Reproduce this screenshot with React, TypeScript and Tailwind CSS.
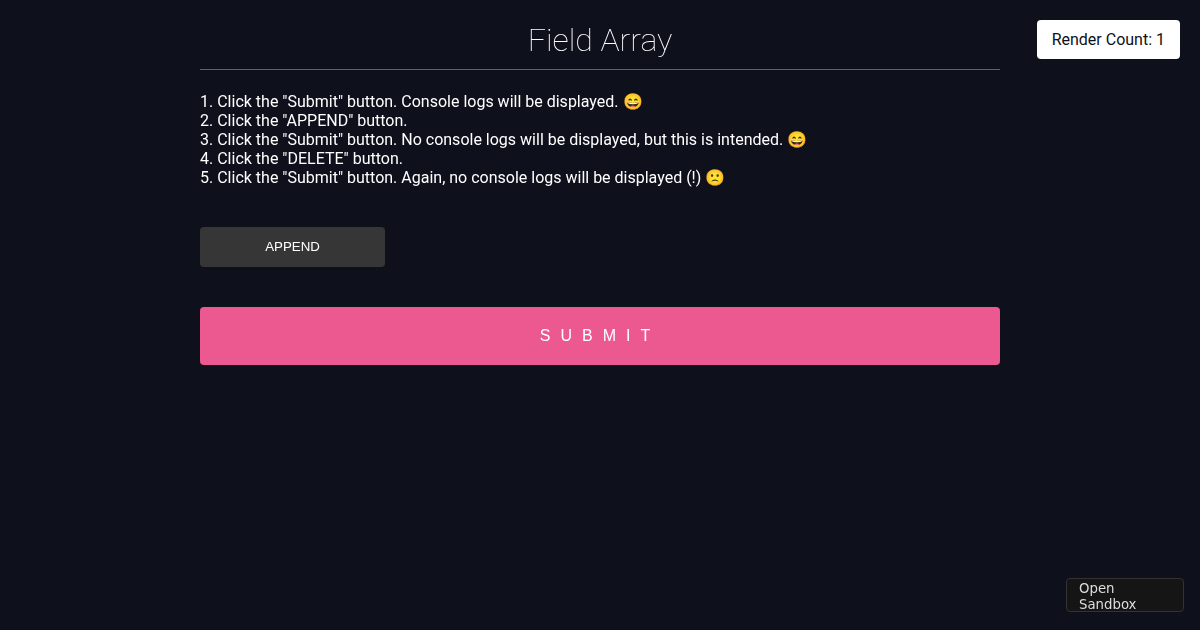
export default function App() {
  return (
    <div className="relative min-h-[630px] bg-[#0e101c] font-['Roboto',sans-serif] text-white overflow-hidden">
      <div className="absolute top-5 right-5 bg-white text-[#0e101c] rounded px-[15px] h-[39px] flex items-center text-base transform-gpu">
        Render Count: 1
      </div>
      <div className="w-[800px] mx-auto transform-gpu">
        <h1 className="text-[32px] font-thin text-center h-[70px] pt-[21px] leading-[38px] border-b border-[#4f6294]">
          Field Array
        </h1>
        <div className="mt-[22px] text-base leading-[19px]">
          <p>1. Click the "Submit" button. Console logs will be displayed. 😄</p>
          <p>2. Click the "APPEND" button.</p>
          <p>3. Click the "Submit" button. No console logs will be displayed, but this is intended. 😄</p>
          <p>4. Click the "DELETE" button.</p>
          <p>5. Click the "Submit" button. Again, no console logs will be displayed (!) 🙁</p>
        </div>
        <button className="block mt-10 w-[185px] h-10 bg-[#363636] rounded-sm font-['Liberation_Sans',sans-serif] text-[13.3px]">
          APPEND
        </button>
        <button className="block mt-10 w-full h-[58px] bg-[#ec5990] rounded font-['Liberation_Sans',sans-serif] text-base tracking-[10px]">
          SUBMIT
        </button>
      </div>
      <button className="absolute right-4 bottom-[18px] w-[118px] h-[34px] bg-[#151515] border border-[#333] rounded text-left pl-3 pr-8 pt-[2px] text-[13.3px] leading-4 text-[#dddddd] font-['DejaVu_Sans',sans-serif] transform-gpu">
        Open Sandbox
      </button>
    </div>
  );
}
